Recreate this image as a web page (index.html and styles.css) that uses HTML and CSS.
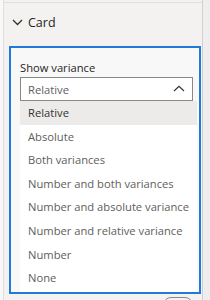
FILE: index.html
```html
<!DOCTYPE html>
<html>
<head>
<meta charset="utf-8">
<link rel="stylesheet" href="styles.css">
</head>
<body>
<div class="page">
  <div class="edge"></div>
  <div class="pane">
    <div class="topline"></div>
    <div class="header">
      <svg class="chev" width="11" height="7" viewBox="0 0 11 7"><path d="M1 1 L5.5 5.5 L10 1" fill="none" stroke="#323130" stroke-width="1.3"/></svg>
      <span class="title">Card</span>
    </div>
    <div class="frame">
      <div class="label">Show variance</div>
      <div class="select">
        <span>Relative</span>
        <svg class="up" width="12" height="7" viewBox="0 0 12 7"><path d="M1 6 L6 1.3 L11 6" fill="none" stroke="#323130" stroke-width="1.1"/></svg>
      </div>
      <ul class="list">
        <li class="sel">Relative</li>
        <li>Absolute</li>
        <li>Both variances</li>
        <li>Number and both variances</li>
        <li>Number and absolute variance</li>
        <li>Number and relative variance</li>
        <li>Number</li>
        <li>None</li>
      </ul>
    </div>
    <div class="below"><div class="toggle"></div></div>
  </div>
  <div class="scroll"></div>
</div>
</body>
</html>
```
FILE: styles.css
```css
html, body {
  margin: 0;
  padding: 0;
}
body {
  width: 210px;
  height: 300px;
  overflow: hidden;
  background: #f3f2f1;
  font-family: "Open Sans", "Noto Sans", sans-serif;
}
.page {
  display: flex;
  height: 300px;
}
.edge {
  width: 3px;
  background: #f8f8f8;
  border-right: 1px solid #e1dfdd;
  flex: none;
}
.pane {
  flex: 1;
  display: flex;
  flex-direction: column;
}
.topline {
  height: 2px;
  border-bottom: 1px solid #e1dfdd;
}
.header {
  height: 43px;
  display: flex;
  align-items: center;
  padding-left: 8px;
  gap: 5px;
  box-sizing: border-box;
  padding-bottom: 4px;
}
.title {
  font-size: 12.5px;
  color: #252423;
}
.frame {
  margin-left: 5px;
  width: 192px;
  height: 248px;
  box-sizing: border-box;
  border: 2px solid #2279dc;
  background: #f8f8f8;
  padding: 12px 2px 0 9px;
  display: flex;
  flex-direction: column;
}
.label {
  font-size: 11.2px;
  color: #252423;
  line-height: 15px;
  height: 17px;
}
.select {
  width: 173px;
  height: 24px;
  flex: none;
  box-sizing: border-box;
  border: 1px solid #8a8886;
  background: #ffffff;
  display: flex;
  align-items: center;
  justify-content: space-between;
  padding: 0 7px 0 7px;
  font-size: 11.2px;
  color: #605e5c;
}
.up {
  margin-bottom: 1px;
}
.list {
  list-style: none;
  margin: 0;
  padding: 0;
  background: #ffffff;
  flex: 1;
}
.list li {
  height: 23.6px;
  line-height: 22.6px;
  padding-top: 1px;
  box-sizing: border-box;
  padding-left: 8px;
  font-size: 11.2px;
  color: #605e5c;
  white-space: nowrap;
}
.list li.sel {
  background: #edebe9;
  color: #323130;
}
.below {
  flex: 1;
  position: relative;
}
.toggle {
  position: absolute;
  left: 159px;
  top: 3px;
  width: 28px;
  height: 14px;
  border: 1px solid #8a8886;
  border-radius: 8px;
}
.scroll {
  width: 7px;
  flex: none;
  border-left: 1px solid #d2d0ce;
  background: #eeeeee;
}
```
